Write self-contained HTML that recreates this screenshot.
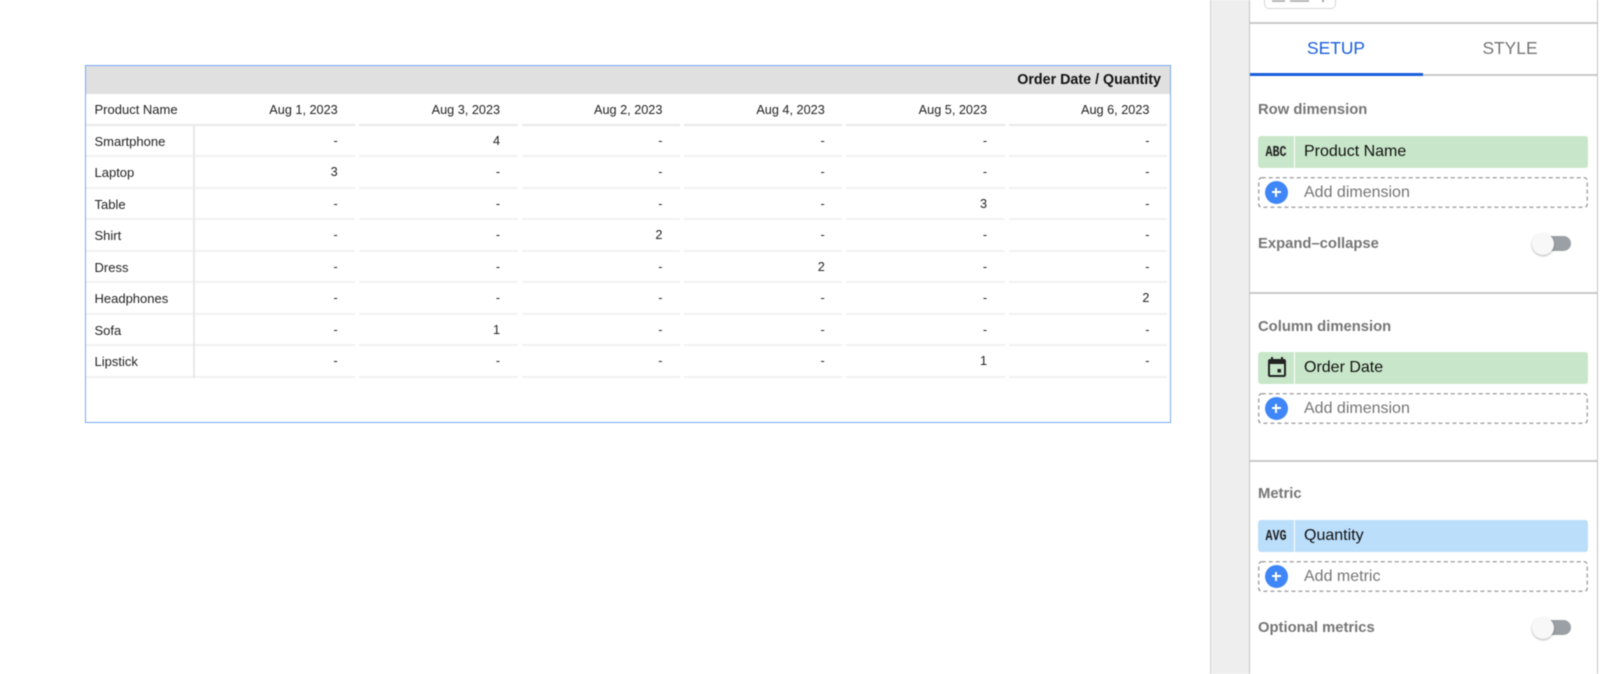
<!DOCTYPE html>
<html lang="en"><head><meta charset="utf-8"><title>Pivot table setup</title>
<style>
html,body{margin:0;padding:0;background:#fff}
body{position:relative;width:1600px;height:674px;overflow:hidden;font-family:"Liberation Sans",sans-serif}
.wrap{position:absolute;inset:0;filter:blur(.45px)}
.abs{position:absolute}
.tbl{position:absolute;left:85px;top:65px;width:1086px;height:358px;box-sizing:border-box;border:1.5px solid #7aa9f5;background:#fff}
.tbar{position:absolute;left:0;right:0;top:0;height:27.500px;background:#e0e0e0;font-weight:bold;font-size:14.3px;line-height:29px;color:#111;text-align:right;padding-right:9px;box-sizing:border-box}
.rows{position:absolute;left:0;top:27.500px;width:1081px}
.r{display:flex;height:31.5px;font-size:12.7px;color:#222}
.r>div{box-sizing:border-box;border-bottom:2px solid #f2f2f2;text-align:right;padding-right:17.5px;width:158.500px;margin-left:4px;line-height:31.500px}
.r>div.n{width:108.500px;margin-left:0;text-align:left;padding:0 0 0 8.5px;font-size:13px}
.r>div.a{width:161px;margin-left:0}
.h{height:32px}
.h>div{border-bottom-color:#e8e8e8!important;line-height:32px!important}
.vd{position:absolute;left:107px;top:59.500px;width:2px;height:252px;background:#e8e8e8}
.side{position:absolute;left:1210px;top:0;width:39px;height:674px;background:#eeeeee;border-left:1px solid #d4d4d4;box-sizing:border-box}
.panel{position:absolute;left:1249px;top:0;width:349px;height:674px;box-sizing:border-box;border-left:1.5px solid #c4c4c4;border-right:1.5px solid #c4c4c4;background:#fff}
.hl{position:absolute;left:1250px;width:347px;height:1.5px;background:#c8c8c8}
.tab{position:absolute;top:36px;font-size:17.4px;line-height:24px;color:#757575;transform:translateX(-50%)}
.lab{position:absolute;left:1258px;font-weight:bold;font-size:14.8px;line-height:20px;color:#757575;white-space:nowrap}
.chip{position:absolute;left:1258px;width:330px;height:32px;border-radius:3px;background:#c8e6c9;font-size:16px;line-height:32.500px;color:#111}
.chip.b{background:#bbdefb}
.chip i{position:absolute;left:36px;top:0;width:1.2px;height:32px;background:#fff}
.chip span{position:absolute;left:46px}
.chip b{position:absolute;left:2px;width:32px;text-align:center;font:bold 15px/33px "Liberation Mono",monospace;transform:scaleX(.78);color:#222}
.add{position:absolute;left:1258px;width:330px;height:31px;font-size:16px;line-height:31px;color:#757575}
.add svg{position:absolute;left:0;top:0}
.add span{position:absolute;left:46px;white-space:nowrap}
.add em{position:absolute;left:6.5px;top:3.500px;width:23px;height:23px;border-radius:50%;background:#3f86f8}
.add em:before{content:"";position:absolute;left:7px;top:10.500px;width:9px;height:2px;background:#fff}
.add em:after{content:"";position:absolute;left:10.500px;top:7px;width:2px;height:9px;background:#fff}
.tg{position:absolute;left:1532px;width:40px;height:24px}
.tg:before{content:"";position:absolute;left:10px;top:4px;width:29px;height:15px;border-radius:8px;background:#9aa0a6}
.tg:after{content:"";position:absolute;left:0;top:1px;width:22px;height:22px;border-radius:50%;background:#f8f8f8;box-shadow:0 1px 2px rgba(0,0,0,.3)}
</style></head><body><div class="wrap">

<div class="tbl">
 <div class="tbar">Order Date / Quantity</div>
 <div class="rows">
  <div class="r h"><div class="n">Product Name</div><div class="a">Aug 1, 2023</div><div>Aug 3, 2023</div><div>Aug 2, 2023</div><div>Aug 4, 2023</div><div>Aug 5, 2023</div><div>Aug 6, 2023</div></div>
  <div class="r"><div class="n">Smartphone</div><div class="a">-</div><div>4</div><div>-</div><div>-</div><div>-</div><div>-</div></div>
  <div class="r"><div class="n">Laptop</div><div class="a">3</div><div>-</div><div>-</div><div>-</div><div>-</div><div>-</div></div>
  <div class="r"><div class="n">Table</div><div class="a">-</div><div>-</div><div>-</div><div>-</div><div>3</div><div>-</div></div>
  <div class="r"><div class="n">Shirt</div><div class="a">-</div><div>-</div><div>2</div><div>-</div><div>-</div><div>-</div></div>
  <div class="r"><div class="n">Dress</div><div class="a">-</div><div>-</div><div>-</div><div>2</div><div>-</div><div>-</div></div>
  <div class="r"><div class="n">Headphones</div><div class="a">-</div><div>-</div><div>-</div><div>-</div><div>-</div><div>2</div></div>
  <div class="r"><div class="n">Sofa</div><div class="a">-</div><div>1</div><div>-</div><div>-</div><div>-</div><div>-</div></div>
  <div class="r"><div class="n">Lipstick</div><div class="a">-</div><div>-</div><div>-</div><div>-</div><div>1</div><div>-</div></div>
 </div>
 <div class="vd"></div>
</div>

<div class="side"></div>
<div class="panel"></div>

<div class="abs" style="left:1264px;top:-10px;width:72px;height:19px;box-sizing:border-box;border:1px solid #d8d8d8;border-radius:5px;background:#fff"></div>
<div class="abs" style="left:1272px;top:0;width:13px;height:2px;background:#b4b4b4"></div>
<div class="abs" style="left:1290px;top:0;width:19px;height:2px;background:#b4b4b4"></div>
<div class="abs" style="left:1322px;top:0;width:2px;height:2px;background:#999"></div>

<div class="hl" style="top:22px"></div>
<div class="tab" style="left:1336px;color:#1a5fdc">SETUP</div>
<div class="tab" style="left:1510px">STYLE</div>
<div class="abs" style="left:1250px;top:74px;width:347px;height:2px;background:#c8c8c8"></div>
<div class="abs" style="left:1250px;top:73px;width:173px;height:2.500px;background:#1a5fdc"></div>

<div class="lab" style="top:100px">Row dimension</div>
<div class="chip" style="top:136px"><b>ABC</b><i></i><span>Product Name</span></div>
<div class="add" style="top:177px"><svg width="330" height="31"><rect x=".75" y=".75" width="328.500" height="29.500" rx="3" fill="none" stroke="#999" stroke-width="1.300" stroke-dasharray="4 3"/></svg><em></em><span>Add dimension</span></div>
<div class="lab" style="top:234px">Expand–collapse</div>
<div class="tg" style="top:232px"></div>

<div class="hl" style="top:292px"></div>

<div class="lab" style="top:317px">Column dimension</div>
<div class="chip" style="top:352px"><svg class="abs" style="left:6.5px;top:4px" width="24" height="24" viewBox="0 0 24 24" fill="#222"><path d="M16 13h-3.500v3.500h3.500v-3.500zM16 1v2H8V1H6v2H5c-1.110 0-1.990.9-1.990 2L3 19c0 1.100.89 2 2 2h14c1.100 0 2-.9 2-2V5c0-1.100-.9-2-2-2h-1V1h-2zm3 18H5V8h14v11z"/></svg><i></i><span>Order Date</span></div>
<div class="add" style="top:393px"><svg width="330" height="31"><rect x=".75" y=".75" width="328.500" height="29.500" rx="3" fill="none" stroke="#999" stroke-width="1.300" stroke-dasharray="4 3"/></svg><em></em><span>Add dimension</span></div>

<div class="hl" style="top:460px"></div>

<div class="lab" style="top:484px">Metric</div>
<div class="chip b" style="top:520px"><b>AVG</b><i></i><span>Quantity</span></div>
<div class="add" style="top:561px"><svg width="330" height="31"><rect x=".75" y=".75" width="328.500" height="29.500" rx="3" fill="none" stroke="#999" stroke-width="1.300" stroke-dasharray="4 3"/></svg><em></em><span>Add metric</span></div>
<div class="lab" style="top:618px">Optional metrics</div>
<div class="tg" style="top:616px"></div>

</div></body></html>
